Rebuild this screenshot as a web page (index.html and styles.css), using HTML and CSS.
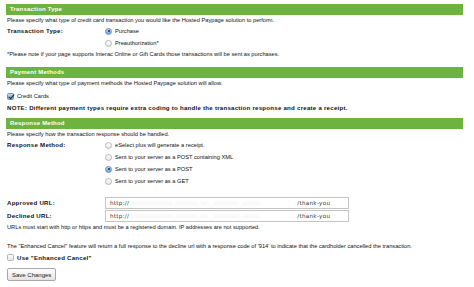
FILE: index.html
```html
<!DOCTYPE html>
<html lang="en">
<head>
    <meta charset="UTF-8">
    <title>Hosted Paypage Configuration</title>
    <link rel="stylesheet" href="styles.css">
</head>
<body>
    <form class="config">
        <section class="block block-first">
            <h2 class="bar">Transaction Type</h2>
            <p class="intro">Please specify what type of credit card transaction you would like the Hosted Paypage solution to perform.</p>
            <div class="field">
                <label class="field-label">Transaction Type:</label>
                <div class="options">
                    <div class="option"><span class="radio checked"></span>Purchase</div>
                    <div class="option"><span class="radio"></span>Preauthorization*</div>
                </div>
            </div>
            <p class="intro">*Please note if your page supports Interac Online or Gift Cards those transactions will be sent as purchases.</p>
        </section>

        <section class="block">
            <h2 class="bar">Payment Methods</h2>
            <p class="intro">Please specify what type of payment methods the Hosted Paypage solution will allow.</p>
            <div class="check-row credit"><span class="checkbox checked"></span>Credit Cards</div>
            <p class="note">NOTE: Different payment types require extra coding to handle the transaction response and create a receipt.</p>
        </section>

        <section class="block block-response">
            <h2 class="bar">Response Method</h2>
            <p class="intro">Please specify how the transaction response should be handled.</p>
            <div class="field">
                <label class="field-label">Response Method:</label>
                <div class="options">
                    <div class="option"><span class="radio"></span>eSelect plus will generate a receipt.</div>
                    <div class="option"><span class="radio"></span>Sent to your server as a POST containing XML</div>
                    <div class="option"><span class="radio checked"></span>Sent to your server as a POST</div>
                    <div class="option"><span class="radio"></span>Sent to your server as a GET</div>
                </div>
            </div>

            <div class="urls">
                <div class="url-row">
                    <label class="field-label">Approved URL:</label>
                    <div class="url-input">http://<span class="blur">xxxxxxxxxxxx_xxxxxx_xx__xxxxxxx_xxxxx</span>/thank-you</div>
                </div>
                <div class="url-row">
                    <label class="field-label">Declined URL:</label>
                    <div class="url-input">http://<span class="blur">xxxxxxxxxxxx_xxxxxx_xx__xxxxxxx_xxxxx</span>/thank-you</div>
                </div>
            </div>
            <p class="intro">URLs must start with http or https and must be a registered domain. IP addresses are not supported.</p>

            <p class="intro cancel-text">The "Enhanced Cancel" feature will return a full response to the decline url with a response code of '914' to indicate that the cardholder cancelled the transaction.</p>
            <div class="check-row bold"><span class="checkbox"></span>Use "Enhanced Cancel"</div>
        </section>

        <button type="button" class="save-btn">Save Changes</button>
    </form>
</body>
</html>
```

FILE: styles.css
```css
* {
    margin: 0;
    padding: 0;
    box-sizing: border-box;
}

body {
    background-color: #fff;
    color: #111;
    font-family: 'Liberation Sans', Arial, sans-serif;
    font-size: 5.7px;
}

.config {
    padding: 4px 11px 0 6px;
}

.block {
    margin-top: 8px;
}

.block-first {
    margin-top: 0;
}

.block-response {
    margin-top: 5px;
}

.bar {
    background-color: #6db33f;
    color: #fff;
    font-size: 6px;
    font-weight: bold;
    letter-spacing: 0.2px;
    height: 11px;
    line-height: 11px;
    padding-left: 4px;
}

.intro {
    line-height: 10px;
    padding-left: 1px;
}

.note {
    font-weight: bold;
    font-size: 6.1px;
    letter-spacing: 0.25px;
    line-height: 11px;
    padding-left: 1px;
}

.field {
    display: grid;
    grid-template-columns: 99px 1fr;
}

.field-label {
    font-weight: bold;
    font-size: 6.1px;
    letter-spacing: 0.25px;
    line-height: 12px;
    padding-left: 1px;
}

.option {
    display: flex;
    align-items: center;
    height: 12px;
    gap: 3px;
}

.radio {
    width: 7px;
    height: 7px;
    border-radius: 50%;
    border: 1px solid #b5b5b5;
    background: linear-gradient(#fff, #e8e8e8);
    position: relative;
}

.radio.checked {
    border-color: #6e8fb8;
    background: linear-gradient(#bcd6f2, #6fa3dc);
}

.radio.checked::after {
    content: '';
    position: absolute;
    left: 1.5px;
    top: 1.5px;
    width: 2px;
    height: 2px;
    border-radius: 50%;
    background-color: #1c2d44;
}

.check-row {
    display: flex;
    align-items: center;
    gap: 3px;
    height: 12px;
    padding-left: 1px;
}

.check-row.credit {
    margin-top: 2px;
}

.check-row.bold {
    font-weight: bold;
    font-size: 6.1px;
    letter-spacing: 0.25px;
}

.checkbox {
    width: 7px;
    height: 7px;
    border-radius: 1.5px;
    border: 1px solid #b5b5b5;
    background: linear-gradient(#fff, #e6e6e6);
    position: relative;
}

.checkbox.checked {
    border-color: #6e8fb8;
    background: linear-gradient(#bcd6f2, #6fa3dc);
}

.checkbox.checked::after {
    content: '';
    position: absolute;
    left: 1.5px;
    top: -1px;
    width: 2px;
    height: 5px;
    border: solid #1c2d44;
    border-width: 0 1.5px 1.5px 0;
    transform: rotate(40deg);
}

.urls {
    margin-top: 9px;
}

.url-row {
    display: grid;
    grid-template-columns: 99px 244px;
    align-items: center;
    height: 13px;
}

.url-input {
    height: 12px;
    line-height: 10px;
    border: 1px solid #c4c4c4;
    padding-left: 4px;
    font-family: 'DejaVu Sans', sans-serif;
    font-size: 5.6px;
    color: #333;
    letter-spacing: 0.3px;
    white-space: nowrap;
    overflow: hidden;
}

.blur {
    display: inline-block;
    width: 168px;
    overflow: hidden;
    vertical-align: top;
    color: #e6e6e6;
    filter: blur(0.9px);
}

.cancel-text {
    margin-top: 9px;
}

.save-btn {
    margin-top: 5px;
    margin-left: 1px;
    height: 13px;
    padding: 0 4px;
    font-family: 'Liberation Sans', Arial, sans-serif;
    font-size: 6px;
    color: #222;
    border: 1px solid #a8a8a8;
    border-radius: 2px;
    background: linear-gradient(#fff, #e3e3e3);
}
```
